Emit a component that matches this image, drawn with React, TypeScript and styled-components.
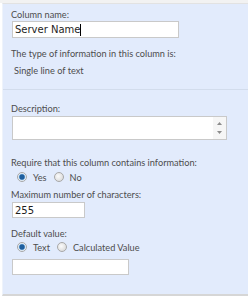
import styled, { createGlobalStyle } from "styled-components";

const GlobalStyle = createGlobalStyle`
  html, body {
    margin: 0;
    padding: 0;
    background: #ffffff;
  }
`;

const Page = styled.div`
  width: 248px;
  height: 300px;
  padding: 3px 0 0 2px;
  box-sizing: border-box;
  background: linear-gradient(#f2f2f2 0 3px, #ffffff 3px);
`;

const Panel = styled.div`
  border-top: 1px solid #e2e2e2;
  border-bottom: 2px solid #d6d6d6;
  border-left: 1px solid #eef3fb;
  background: #e2ebfc;
  font-family: Lato, "Liberation Sans", sans-serif;
  font-size: 9.2px;
  color: #4d4d4d;
`;

const Section = styled.div<{ $top: number; $bottom: number; $divider?: boolean }>`
  padding: ${(p) => p.$top}px 8px ${(p) => p.$bottom}px 8px;
  border-bottom: ${(p) => (p.$divider ? "1px solid #d2dcec" : "none")};
  display: flex;
  flex-direction: column;
  align-items: flex-start;
`;

const Label = styled.div<{ $gap?: number; $indent?: number }>`
  line-height: 14px;
  height: 13px;
  white-space: nowrap;
  margin-top: ${(p) => p.$gap ?? 0}px;
  padding-left: ${(p) => p.$indent ?? 0}px;
`;

const TextInput = styled.div<{ $w: number; $h?: number; $gap?: number }>`
  width: ${(p) => p.$w}px;
  height: ${(p) => p.$h ?? 16}px;
  box-sizing: border-box;
  margin-top: ${(p) => p.$gap ?? 1}px;
  margin-left: 1px;
  background: #ffffff;
  border: 1px solid #c9c9c9;
  font-family: "DejaVu Sans", Verdana, sans-serif;
  font-size: 10px;
  color: #1e1e1e;
  padding-left: 2px;
  display: flex;
  align-items: center;
`;

const Caret = styled.span`
  display: inline-block;
  width: 1px;
  height: 12px;
  background: #000;
`;

const TextArea = styled.div`
  width: 215px;
  height: 24px;
  box-sizing: border-box;
  margin-top: 1px;
  margin-left: 1px;
  background: #ffffff;
  border: 1px solid #c9c9c9;
  display: flex;
  justify-content: flex-end;
`;

const ScrollBar = styled.div`
  width: 13px;
  display: flex;
  flex-direction: column;
  justify-content: space-between;
  align-items: center;
  padding: 5px 0 5px;
  background: #f6f6f6;
`;

const RadioRow = styled.div<{ $gap: number }>`
  display: flex;
  align-items: center;
  height: 12px;
  margin-top: ${(p) => p.$gap}px;
  padding-left: 6px;
`;

const RadioDot = styled.span<{ $on?: boolean }>`
  width: 10px;
  height: 10px;
  border-radius: 50%;
  box-sizing: border-box;
  border: 1px solid #a8a8a8;
  background: ${(p) =>
    p.$on
      ? "radial-gradient(circle, #1f5f9e 0 2.2px, #6fa3d3 2.8px, #e9f1f8 3.6px)"
      : "radial-gradient(circle at 40% 40%, #fbfbfb 0, #d3d3d3 100%)"};
  margin-right: 6px;
`;

const RadioText = styled.span`
  margin-right: 7px;
`;

const Arrow = ({ up }: { up?: boolean }) => (
  <svg width="5" height="3" viewBox="0 0 5 3">
    <path d={up ? "M0 3 L2.5 0 L5 3 Z" : "M0 0 L2.5 3 L5 0 Z"} fill="#8c8c8c" />
  </svg>
);

function App() {
  return (
    <>
      <GlobalStyle />
      <Page>
        <Panel>
          <Section $top={4} $bottom={12} $divider>
            <Label>Column name:</Label>
            <TextInput $w={167} $h={17} $gap={0}>
              Server Name<Caret />
            </TextInput>
            <Label $gap={9}>The type of information in this column is:</Label>
            <Label $gap={4} $indent={3}>
              Single line of text
            </Label>
          </Section>
          <Section $top={12} $bottom={19}>
            <Label>Description:</Label>
            <TextArea>
              <ScrollBar>
                <Arrow up />
                <Arrow />
              </ScrollBar>
            </TextArea>
            <Label $gap={16}>Require that this column contains information:</Label>
            <RadioRow $gap={2}>
              <RadioDot $on />
              <RadioText>Yes</RadioText>
              <RadioDot />
              <RadioText>No</RadioText>
            </RadioRow>
            <Label $gap={5}>Maximum number of characters:</Label>
            <TextInput $w={73} $gap={1}>
              255
            </TextInput>
            <Label $gap={9}>Default value:</Label>
            <RadioRow $gap={1}>
              <RadioDot $on />
              <RadioText>Text</RadioText>
              <RadioDot />
              <RadioText>Calculated Value</RadioText>
            </RadioRow>
            <TextInput $w={117} $gap={6} />
          </Section>
        </Panel>
      </Page>
    </>
  );
}

export default App;
